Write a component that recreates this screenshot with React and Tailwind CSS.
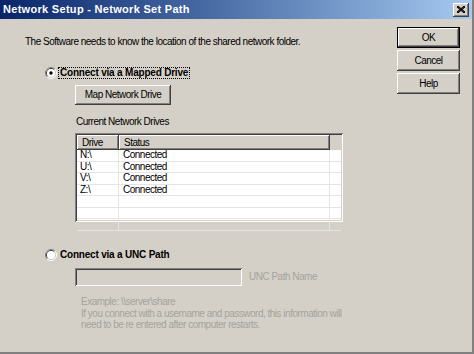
import React from "react";

const raised =
  "shadow-[inset_-1px_-1px_0_#404040,inset_1px_1px_0_#ffffff,inset_-2px_-2px_0_#808080,inset_2px_2px_0_#d4d0c8]";
const sunken =
  "shadow-[inset_1px_1px_0_#808080,inset_-1px_-1px_0_#ffffff,inset_2px_2px_0_#404040,inset_-2px_-2px_0_#d4d0c8]";

function Radio({ checked }) {
  return (
    <svg width="12" height="12" viewBox="0 0 12 12" className="shrink-0">
      <path d="M2.11 9.89 A5.5 5.5 0 0 1 9.89 2.11" fill="none" stroke="#808080" strokeWidth="1" />
      <path d="M9.89 2.11 A5.5 5.5 0 0 1 2.11 9.89" fill="none" stroke="#ffffff" strokeWidth="1" />
      <path d="M2.82 9.18 A4.5 4.5 0 0 1 9.18 2.82" fill="none" stroke="#404040" strokeWidth="1" />
      <path d="M9.18 2.82 A4.5 4.5 0 0 1 2.82 9.18" fill="none" stroke="#d4d0c8" strokeWidth="1" />
      <circle cx="6" cy="6" r="4" fill="#ffffff" />
      {checked && <circle cx="6" cy="6" r="1.7" fill="#000" />}
    </svg>
  );
}

function Btn({ children, def, className = "" }) {
  return (
    <div
      className={`flex items-center justify-center bg-[#d4d0c8] text-black ${
        def ? "border border-black" : ""
      } ${className}`}
    >
      <div className={`w-full h-full flex items-center justify-center ${raised}`}>{children}</div>
    </div>
  );
}

const rows = ["N:\\", "U:\\", "V:\\", "Z:\\", "", "", ""];

export default function App() {
  return (
    <div
      className="w-[474px] h-[354px] bg-[#d4d0c8] flex flex-col border-r-2 border-b-2 border-r-[#808080] border-b-[#808080] overflow-hidden text-[10px] tracking-[-0.5px] leading-none text-black whitespace-nowrap"
      style={{ fontFamily: '"Liberation Sans", Arial, sans-serif' }}
    >
      <div className="h-[19px] shrink-0 flex items-center justify-between pl-[3px] pr-[3px] bg-gradient-to-r from-[#0a246a] to-[#a6caf0]">
        <span className="text-white font-bold text-[11px] tracking-[0.3px]">
          Network Setup - Network Set Path
        </span>
        <div className={`w-[16px] h-[14px] bg-[#d4d0c8] flex items-center justify-center ${raised}`}>
          <svg width="8" height="7" viewBox="0 0 8 7">
            <path d="M0 0 L8 7 M1 0 L8 6 M0 1 L7 7 M8 0 L0 7 M7 0 L0 6 M8 1 L1 7" stroke="#000" strokeWidth="1" />
          </svg>
        </div>
      </div>

      <div className="flex-1 flex">
        <div className="flex-1 flex flex-col pl-[25px] pt-[18px]">
          <div className="h-[10px] flex items-center">
            The Software needs to know the location of the shared network folder.
          </div>

          <div className="mt-[20px] ml-[20px] flex items-center gap-[1px] h-[12px]">
            <Radio checked />
            <span className="font-bold tracking-[-0.2px] h-[12px] px-[1px] flex items-center border border-dotted border-black">
              Connect via a Mapped Drive
            </span>
          </div>

          <Btn className="mt-[6px] ml-[50px] w-[96px] h-[20px]">Map Network Drive</Btn>

          <div className="mt-[12px] ml-[51px] h-[10px] flex items-center">Current Network Drives</div>

          <div className={`mt-[6px] ml-[50px] w-[268px] h-[89px] bg-white p-[2px] ${sunken}`}>
            <div className="flex h-[15px]">
              <div className={`w-[42px] h-full flex items-center pl-[5px] bg-[#d4d0c8] ${raised}`}>Drive</div>
              <div className={`w-[211px] h-full flex items-center pl-[5px] bg-[#d4d0c8] ${raised}`}>Status</div>
              <div className="flex-1 h-full bg-[#d4d0c8]"></div>
            </div>
            {rows.map((d, i) => (
              <div key={i} className="flex h-[11.5px] border-b border-[#e4e4e4]">
                <div className="w-[42px] h-full flex items-center pl-[3px] border-r border-[#e4e4e4]">{d}</div>
                <div className="w-[211px] h-full flex items-center pl-[4px] border-r border-[#e4e4e4]">
                  {d ? "Connected" : ""}
                </div>
                <div className="flex-1"></div>
              </div>
            ))}
          </div>

          <div className="mt-[27px] ml-[20px] flex items-center gap-[2px] h-[12px]">
            <Radio />
            <span className="font-bold tracking-[-0.2px] pl-[1px]">Connect via a UNC Path</span>
          </div>

          <div className="mt-[7px] ml-[50px] flex items-center">
            <div className={`w-[167px] h-[18px] bg-[#d4d0c8] ${sunken}`}></div>
            <span className="ml-[7px] text-[#a5a39b]">UNC Path Name</span>
          </div>

          <div className="mt-[11px] ml-[56px] flex flex-col text-[#a5a39b]">
            <div className="h-[10px] flex items-center">Example: \\server\share</div>
            <div className="mt-[1px] h-[11px] flex items-center">
              If you connect with a username and password, this information will
            </div>
            <div className="h-[11px] flex items-center">need to be re entered after computer restarts.</div>
          </div>
        </div>

        <div className="w-[75px] shrink-0 flex flex-col gap-[2px] pt-[8px] pr-[12px]">
          <Btn def className="w-[63px] h-[21px]">OK</Btn>
          <Btn className="w-[63px] h-[21px]">Cancel</Btn>
          <Btn className="w-[63px] h-[21px]">Help</Btn>
        </div>
      </div>
    </div>
  );
}
